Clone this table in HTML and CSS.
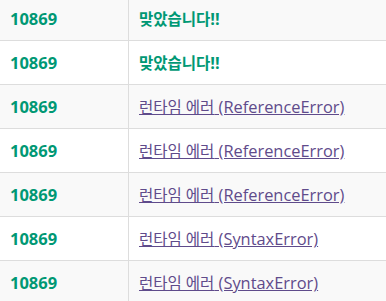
FILE: index.html
```html
<!DOCTYPE html>
<html lang="ko">
<head>
<meta charset="utf-8">
<link rel="stylesheet" href="styles.css">
</head>
<body>
<table class="status">
  <tbody>
    <tr><td class="pid">10869</td><td><span class="ac"><span class="ko">맞았습니다</span>!!</span></td></tr>
    <tr><td class="pid">10869</td><td><span class="ac"><span class="ko">맞았습니다</span>!!</span></td></tr>
    <tr><td class="pid">10869</td><td><a class="rte" href="#"><span class="ko">런타임 에러</span> (ReferenceError)</a></td></tr>
    <tr><td class="pid">10869</td><td><a class="rte" href="#"><span class="ko">런타임 에러</span> (ReferenceError)</a></td></tr>
    <tr><td class="pid">10869</td><td><a class="rte" href="#"><span class="ko">런타임 에러</span> (ReferenceError)</a></td></tr>
    <tr><td class="pid">10869</td><td><a class="rte" href="#"><span class="ko">런타임 에러</span> (SyntaxError)</a></td></tr>
    <tr><td class="pid">10869</td><td><a class="rte" href="#"><span class="ko">런타임 에러</span> (SyntaxError)</a></td></tr>
  </tbody>
</table>
</body>
</html>
```

FILE: styles.css
```css
html, body {
  margin: 0;
  padding: 0;
  background: #fff;
}
body {
  font-family: "Open Sans", "Noto Sans CJK KR", sans-serif;
  font-size: 16.4px;
  color: #333;
  overflow: hidden;
}
.status {
  width: 100%;
  border-collapse: collapse;
  border-spacing: 0;
  margin-top: -4px;
}
.status td {
  border-top: 1px solid #ddd;
  padding: 10px 10px;
  line-height: 23px;
  white-space: nowrap;
  text-align: left;
}
.status td + td {
  border-left: 1px solid #ddd;
}
.status tr:nth-child(odd) td {
  background: #f9f9f9;
}
.pid {
  width: 108px;
  font-weight: 700;
  font-size: 16.5px;
  color: #009874;
}
.ac {
  font-weight: 700;
  color: #009874;
}
.ko {
  font-size: 15.5px;
  line-height: 1;
}
.rte {
  color: #5f4b8b;
  text-decoration: underline;
}
```
